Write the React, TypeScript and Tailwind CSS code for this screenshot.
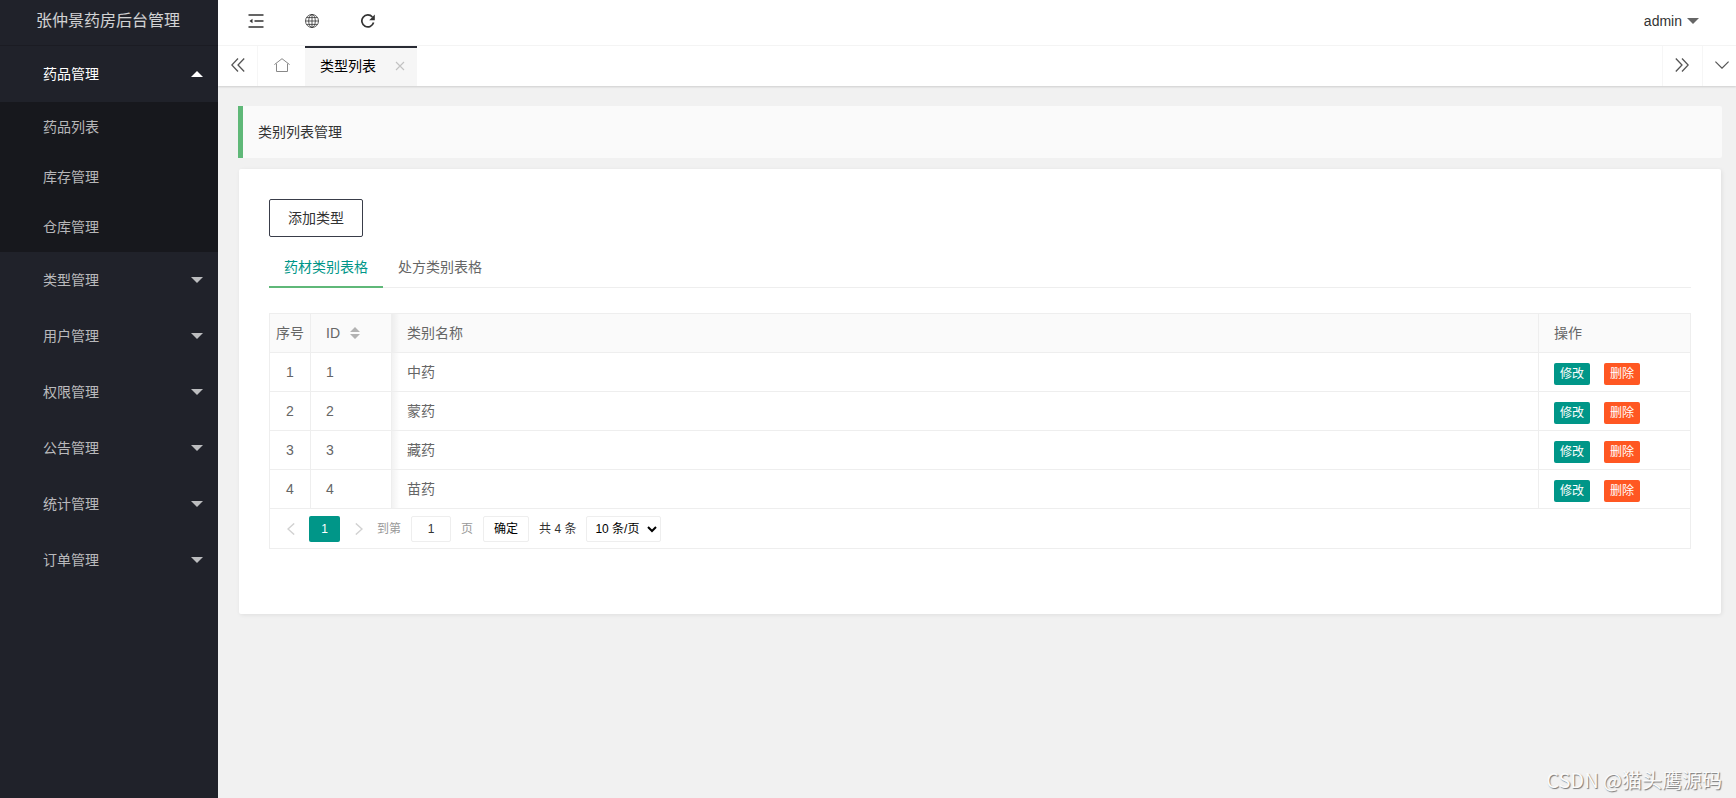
import React, { useState } from 'react';

const menus = [
  { name: '药品管理', children: ['药品列表', '库存管理', '仓库管理'] },
  { name: '类型管理', children: ['类型列表'] },
  { name: '用户管理', children: ['用户列表'] },
  { name: '权限管理', children: ['权限列表'] },
  { name: '公告管理', children: ['公告列表'] },
  { name: '统计管理', children: ['统计列表'] },
  { name: '订单管理', children: ['订单列表'] },
];

const tables = [
  { name: '药材类别表格', rows: ['中药', '蒙药', '藏药', '苗药'] },
  { name: '处方类别表格', rows: ['中药', '蒙药', '藏药', '苗药'] },
];

const Caret: React.FC<{ up?: boolean; className?: string }> = ({ up, className }) => (
  <svg viewBox="0 0 12 6" className={`w-3 h-1.5 fill-current ${className ?? ''}`}>
    <path d={up ? 'M0 6 6 0l6 6z' : 'M0 0h12L6 6z'} />
  </svg>
);

const Sidebar: React.FC = () => {
  const [open, setOpen] = useState('药品管理');

  return (
    <aside className="w-[218px] shrink-0 bg-[#20222a]">
      <h1 className="h-[46px] pb-1 pr-0.5 flex items-center justify-center text-base text-white/80 border-b border-black/15">
        张仲景药房后台管理
      </h1>
      <nav>
        {menus.map((menu) => (
          <div key={menu.name}>
            <button
              onClick={() => setOpen(open === menu.name ? '' : menu.name)}
              className={`w-full h-14 pl-[43px] pr-[15px] flex items-center justify-between ${
                open === menu.name ? 'text-white' : 'text-white/70'
              }`}
            >
              {menu.name}
              <Caret up={open === menu.name} />
            </button>
            {open === menu.name && (
              <div className="bg-[#17181d]">
                {menu.children.map((child) => (
                  <a key={child} href="#" className="h-[50px] pl-[43px] flex items-center text-white/70">
                    {child}
                  </a>
                ))}
              </div>
            )}
          </div>
        ))}
      </nav>
    </aside>
  );
};

const Header: React.FC = () => (
  <header className="h-[46px] pl-2.5 pr-[37px] pb-1 flex items-center justify-between bg-white border-b border-[#f6f6f6] text-[#333]">
    <div className="flex">
      <button aria-label="侧边伸缩" className="w-14 flex justify-center">
        <svg viewBox="0 0 16 14" className="w-4 h-3.5" fill="none" stroke="currentColor" strokeWidth="1.5">
          <path d="M.5 1h15M6.5 7h9M.5 13h15" />
          <path d="M4.5 4.8v4.4L1.5 7z" fill="currentColor" stroke="none" />
        </svg>
      </button>
      <button aria-label="网站" className="w-14 flex justify-center">
        <svg viewBox="0 0 14 14" className="w-3.5 h-3.5" fill="none" stroke="currentColor" strokeWidth="0.8">
          <circle cx="7" cy="7" r="6.5" />
          <ellipse cx="7" cy="7" rx="3.3" ry="6.5" />
          <path d="M7 .5v13M.5 7h13M1.5 3.6h11M1.5 10.4h11" />
        </svg>
      </button>
      <button aria-label="刷新" className="w-14 flex justify-center">
        <svg viewBox="0 0 14 14" className="w-3.5 h-3.5" fill="none" stroke="currentColor" strokeWidth="1.7">
          <path d="M12.6 8.6A6 6 0 1 1 11.4 3" />
          <path d="M13.8.6v5.6H8.2z" fill="currentColor" stroke="none" />
        </svg>
      </button>
    </div>
    <button className="flex items-center gap-[5px]">
      admin
      <Caret className="text-[#666]" />
    </button>
  </header>
);

const PageTabs: React.FC = () => (
  <div className="h-10 flex bg-white shadow-[0_1px_2px_rgba(0,0,0,0.15)] text-[#555] relative">
    <button aria-label="向左" className="w-10 pb-0.5 flex items-center justify-center border-r border-[#f6f6f6]">
      <svg viewBox="0 0 14 14" className="w-3.5 h-3.5" fill="none" stroke="currentColor" strokeWidth="1.3">
        <path d="M7 .5.8 7 7 13.5M13.2.5 7 7l6.2 6.5" />
      </svg>
    </button>
    <button aria-label="主页" className="w-[47px] pb-0.5 flex items-center justify-center text-[#888]">
      <svg viewBox="0 0 16 14" className="w-4 h-3.5" fill="none" stroke="currentColor" strokeWidth="1">
        <path d="M.4 6.6 8 .7l7.6 5.9M2.5 5.6v7.9h11V5.6" />
      </svg>
    </button>
    <div className="w-28 pl-[15px] pr-3 pb-0.5 flex items-center justify-between bg-[#f6f6f6] border-t-2 border-[#292b34] text-black">
      <a href="#">类型列表</a>
      <button aria-label="关闭" className="text-[#c2c2c2]">
        <svg viewBox="0 0 10 10" className="w-2.5 h-2.5" fill="none" stroke="currentColor" strokeWidth="1.1">
          <path d="m1 1 8 8M9 1 1 9" />
        </svg>
      </button>
    </div>
    <button aria-label="向右" className="w-[41px] pr-0.5 pb-0.5 ml-auto flex items-center justify-center border-x border-[#f6f6f6]">
      <svg viewBox="0 0 14 14" className="w-3.5 h-3.5" fill="none" stroke="currentColor" strokeWidth="1.3">
        <path d="M.8.5 7 7 .8 13.5M7 .5 13.2 7 7 13.5" />
      </svg>
    </button>
    <button aria-label="更多" className="w-[33px] pl-3 pb-0.5 flex items-center">
      <svg viewBox="0 0 14 8" className="w-3.5 h-2" fill="none" stroke="currentColor" strokeWidth="1.2">
        <path d="M.4.6 7 7.2 13.6.6" />
      </svg>
    </button>
  </div>
);

const Pager: React.FC<{ total: number }> = ({ total }) => (
  <div className="h-[39px] pl-1 flex items-center text-xs text-[#333]">
    <button aria-label="上一页" className="w-[35px] pr-0.5 flex justify-center text-[#d2d2d2]">
      <svg viewBox="0 0 8 12" className="w-2 h-3" fill="none" stroke="currentColor" strokeWidth="1.4">
        <path d="M7.2.4 1 6l6.2 5.6" />
      </svg>
    </button>
    <button className="w-[31px] h-[26px] rounded-xs bg-[#009688] text-white">1</button>
    <button aria-label="下一页" className="w-[37px] flex justify-center text-[#d2d2d2]">
      <svg viewBox="0 0 8 12" className="w-2 h-3" fill="none" stroke="currentColor" strokeWidth="1.4">
        <path d="M.8.4 7 6 .8 11.6" />
      </svg>
    </button>
    <label className="flex items-center gap-2.5 text-[#999]">
      到第
      <input
        defaultValue="1"
        className="w-10 h-[26px] border border-[#eee] rounded-xs text-center text-[#333] bg-white"
      />
      页
    </label>
    <button className="w-[46px] h-[26px] ml-2.5 border border-[#eee] rounded-xs bg-white text-black">确定</button>
    <span className="mx-2.5">共 {total} 条</span>
    <select aria-label="每页条数" className="w-[75px] h-[26px] px-1 border border-[#eee] rounded-xs bg-white text-black">
      <option>10 条/页</option>
      <option>20 条/页</option>
      <option>30 条/页</option>
    </select>
  </div>
);

const cell = 'h-[39px] p-0 border-b border-r border-[#eee] font-normal';
const fade = 'bg-[linear-gradient(to_right,rgba(0,0,0,0.05),transparent_8px)]';

const TypeTable: React.FC<{ rows: string[] }> = ({ rows }) => (
  <div className="mt-[25px] border border-[#eee] text-[#666]">
    <table className="w-full table-fixed border-separate border-spacing-0 text-left">
      <colgroup>
        <col className="w-[41px]" />
        <col className="w-[81px]" />
        <col />
        <col className="w-[151px]" />
      </colgroup>
      <thead className="bg-[#fafafa]">
        <tr>
          <th className={`${cell} text-center`}>序号</th>
          <th className={cell}>
            <button className="pl-[15px] flex items-center gap-2.5">
              ID
              <svg viewBox="0 0 10 12" className="w-2.5 h-3 fill-[#b2b2b2]">
                <path d="M0 5 5 0l5 5zM0 7h10l-5 5z" />
              </svg>
            </button>
          </th>
          <th className={`${cell} ${fade}`}>
            <span className="pl-[15px]">类别名称</span>
          </th>
          <th className="h-[39px] p-0 pl-[15px] border-b border-[#eee] font-normal">操作</th>
        </tr>
      </thead>
      <tbody>
        {rows.map((name, i) => (
          <tr key={name}>
            <td className={`${cell} text-center`}>{i + 1}</td>
            <td className={cell}>
              <span className="pl-[15px]">{i + 1}</span>
            </td>
            <td className={`${cell} ${fade}`}>
              <span className="pl-[15px]">{name}</span>
            </td>
            <td className="h-[39px] p-0 pl-[15px] border-b border-[#eee]">
              <div className="pt-1 flex gap-3.5 text-xs text-white">
                <button className="w-9 h-[22px] rounded-xs bg-[#009688]">修改</button>
                <button className="w-9 h-[22px] rounded-xs bg-[#ff5722]">删除</button>
              </div>
            </td>
          </tr>
        ))}
      </tbody>
    </table>
    <Pager total={rows.length} />
  </div>
);

const App: React.FC = () => {
  const [active, setActive] = useState(0);

  return (
    <div className="min-h-screen flex relative bg-[#f1f1f1] text-sm text-[#333] font-['Liberation_Sans','Noto_Sans_CJK_SC',sans-serif]">
      <Sidebar />
      <div className="flex-1 min-w-0">
        <Header />
        <PageTabs />
        <main className="pt-5 pl-5 pr-3.5">
          <blockquote className="h-[52px] pl-[15px] flex items-center bg-[#fafafa] border-l-[5px] border-[#5fb878] rounded-r-xs">
            类别列表管理
          </blockquote>
          <section className="mt-[11px] ml-px mr-px pt-[30px] px-[30px] pb-[65px] bg-white rounded-xs shadow-[1px_1px_4px_rgba(0,0,0,0.08)]">
            <button className="w-[94px] h-[38px] block border border-[#393d49] rounded-xs bg-white">添加类型</button>
            <div className="mt-2.5 h-[41px] flex border-b border-[#eee]">
              {tables.map((table, i) => (
                <button
                  key={table.name}
                  onClick={() => setActive(i)}
                  className={`px-[15px] -mb-px border-b-2 ${
                    active === i ? 'text-[#009688] border-[#5fb878]' : 'text-[#666] border-transparent'
                  }`}
                >
                  {table.name}
                </button>
              ))}
            </div>
            <TypeTable rows={tables[active].rows} />
          </section>
        </main>
      </div>
      <div className="absolute right-3.5 bottom-1 text-xl text-[#fafafa] font-['Liberation_Sans_Narrow','Noto_Sans_CJK_SC',sans-serif] [text-shadow:1px_1px_1px_#777]">
        CSDN @猫头鹰源码
      </div>
    </div>
  );
};

export default App;
